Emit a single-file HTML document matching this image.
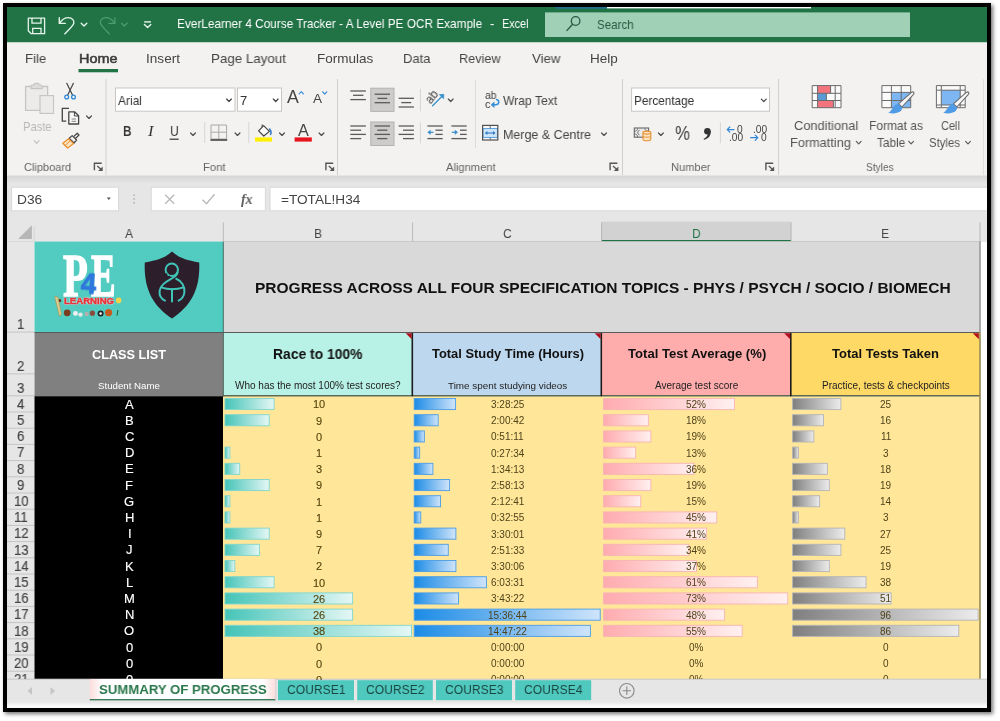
<!DOCTYPE html>
<html><head><meta charset="utf-8"><title>Excel</title>
<style>
html,body{margin:0;padding:0;background:#fff;}
body{width:1000px;height:721px;position:relative;overflow:hidden;font-family:"Liberation Sans",sans-serif;}
#frame{position:absolute;left:3px;top:3px;width:980px;height:701px;border:4px solid #000;box-shadow:2px 2px 4px rgba(0,0,0,.55);background:transparent;z-index:5;pointer-events:none;}
svg#g{position:absolute;left:0;top:0;}
.t{position:absolute;white-space:nowrap;transform-origin:0 50%;will-change:transform;font-family:"Liberation Sans",sans-serif;}
</style></head><body>
<div id="frame"></div>
<svg id="g" width="1000" height="721" viewBox="0 0 1000 721">
<defs>
<linearGradient id="gB" x1="0" x2="1" y1="0" y2="0"><stop offset="0" stop-color="#45c4b8"/><stop offset="1" stop-color="#e4f7f5"/></linearGradient>
<linearGradient id="gC" x1="0" x2="1" y1="0" y2="0"><stop offset="0" stop-color="#1b8be6"/><stop offset="1" stop-color="#cfe4fa"/></linearGradient>
<linearGradient id="gD" x1="0" x2="1" y1="0" y2="0"><stop offset="0" stop-color="#ffabaf"/><stop offset="1" stop-color="#fff0f0"/></linearGradient>
<linearGradient id="gE" x1="0" x2="1" y1="0" y2="0"><stop offset="0" stop-color="#7f7f7f"/><stop offset="1" stop-color="#ececec"/></linearGradient>
<linearGradient id="gSh" x1="0" x2="0" y1="0" y2="1"><stop offset="0" stop-color="#d4d4d4"/><stop offset="1" stop-color="#e6e6e6"/></linearGradient>
<linearGradient id="gTab" x1="0" x2="1" y1="0" y2="0"><stop offset="0" stop-color="#fbdcdc"/><stop offset="0.07" stop-color="#ffffff"/><stop offset="0.93" stop-color="#ffffff"/><stop offset="1" stop-color="#fbdcdc"/></linearGradient>
<linearGradient id="gTb" x1="0" x2="0" y1="0" y2="1"><stop offset="0" stop-color="#e6e6e6"/><stop offset="0.6" stop-color="#f8f8f8"/><stop offset="1" stop-color="#fcfcfc"/></linearGradient>
</defs>
<rect x="7.00" y="7.00" width="980.00" height="35.50" fill="#217346" />
<rect x="555.00" y="6.30" width="52.00" height="2.50" fill="#24708a" />
<rect x="607.00" y="6.80" width="204.00" height="1.60" fill="#ffffff" />
<rect x="545.00" y="12.40" width="365.00" height="24.60" fill="#a0d0b6" />
<rect x="7.00" y="42.50" width="980.00" height="133.10" fill="#f3f2f1" />
<rect x="7.00" y="175.60" width="980.00" height="66.40" fill="#e6e6e6" />
<rect x="7.00" y="175.60" width="980.00" height="7.40" fill="url(#gSh)" />
<rect x="11.60" y="187.20" width="107.00" height="23.60" fill="#fff" stroke="#d8d8d8" stroke-width="1"/>
<rect x="151.20" y="187.20" width="114.20" height="23.60" fill="#fff" stroke="#d8d8d8" stroke-width="1"/>
<rect x="270.00" y="187.20" width="720.00" height="23.60" fill="#fff" stroke="#d8d8d8" stroke-width="1"/>
<rect x="78.50" y="69.00" width="39.50" height="3.30" fill="#217346" />
<line x1="106.00" y1="79.00" x2="106.00" y2="175.00" stroke="#d0cfce" stroke-width="1" />
<line x1="337.50" y1="79.00" x2="337.50" y2="175.00" stroke="#d0cfce" stroke-width="1" />
<line x1="622.50" y1="79.00" x2="622.50" y2="175.00" stroke="#d0cfce" stroke-width="1" />
<line x1="778.60" y1="79.00" x2="778.60" y2="175.00" stroke="#d0cfce" stroke-width="1" />
<line x1="983.40" y1="79.00" x2="983.40" y2="175.00" stroke="#e0dfde" stroke-width="1" />
<line x1="475.50" y1="80.00" x2="475.50" y2="148.00" stroke="#dddcdb" stroke-width="1" />
<line x1="204.70" y1="122.00" x2="204.70" y2="143.00" stroke="#d6d5d4" stroke-width="1" />
<line x1="248.80" y1="122.00" x2="248.80" y2="143.00" stroke="#d6d5d4" stroke-width="1" />
<line x1="420.40" y1="88.80" x2="420.40" y2="111.40" stroke="#d6d5d4" stroke-width="1" />
<line x1="420.40" y1="122.30" x2="420.40" y2="143.40" stroke="#d6d5d4" stroke-width="1" />
<line x1="720.40" y1="122.30" x2="720.40" y2="143.30" stroke="#d6d5d4" stroke-width="1" />
<path d="M34.10 140.70 L36.60 143.30 L39.10 140.70" fill="none" stroke="#c2c1c0" stroke-width="1.2" stroke-linecap="round" stroke-linejoin="round"/>
<rect x="115.50" y="88.00" width="119.50" height="23.20" fill="#fff" stroke="#c8c6c4" stroke-width="1"/>
<rect x="237.50" y="88.00" width="44.00" height="23.20" fill="#fff" stroke="#c8c6c4" stroke-width="1"/>
<path d="M226.60 99.05 L229.00 101.55 L231.40 99.05" fill="none" stroke="#444" stroke-width="1.25" stroke-linecap="round" stroke-linejoin="round"/>
<path d="M273.30 99.05 L275.70 101.55 L278.10 99.05" fill="none" stroke="#444" stroke-width="1.25" stroke-linecap="round" stroke-linejoin="round"/>
<rect x="631.60" y="88.00" width="137.90" height="23.20" fill="#fff" stroke="#c8c6c4" stroke-width="1"/>
<path d="M761.40 99.15 L763.80 101.65 L766.20 99.15" fill="none" stroke="#444" stroke-width="1.25" stroke-linecap="round" stroke-linejoin="round"/>
<line x1="169.60" y1="139.20" x2="178.70" y2="139.20" stroke="#333" stroke-width="1.2" />
<path d="M190.60 132.95 L193.00 135.45 L195.40 132.95" fill="none" stroke="#505050" stroke-width="1.25" stroke-linecap="round" stroke-linejoin="round"/>
<path d="M601.60 132.95 L604.00 135.45 L606.40 132.95" fill="none" stroke="#505050" stroke-width="1.25" stroke-linecap="round" stroke-linejoin="round"/>
<path d="M856.30 141.35 L858.70 143.85 L861.10 141.35" fill="none" stroke="#606060" stroke-width="1.25" stroke-linecap="round" stroke-linejoin="round"/>
<path d="M908.70 141.35 L911.10 143.85 L913.50 141.35" fill="none" stroke="#606060" stroke-width="1.25" stroke-linecap="round" stroke-linejoin="round"/>
<path d="M965.60 141.35 L968.00 143.85 L970.40 141.35" fill="none" stroke="#606060" stroke-width="1.25" stroke-linecap="round" stroke-linejoin="round"/>
<path d="M658.50 132.95 L660.90 135.45 L663.30 132.95" fill="none" stroke="#505050" stroke-width="1.25" stroke-linecap="round" stroke-linejoin="round"/>
<path d="M106.8 197.5 L110.8 197.5 L108.8 199.9 Z" fill="#555" stroke="none" stroke-width="1" />
<rect x="133.30" y="194.40" width="1.60" height="1.60" fill="#b5b5b5" />
<rect x="133.30" y="198.20" width="1.60" height="1.60" fill="#b5b5b5" />
<rect x="133.30" y="202.00" width="1.60" height="1.60" fill="#b5b5b5" />
<path d="M165.2 194.8 L174.2 203.8 M174.2 194.8 L165.2 203.8" fill="none" stroke="#b9b9b9" stroke-width="1.3" />
<path d="M202.5 199.8 L206.5 203.8 L214.5 194.3" fill="none" stroke="#b9b9b9" stroke-width="1.4" />
<rect x="7.00" y="221.60" width="973.50" height="20.00" fill="#e6e6e6" />
<rect x="601.50" y="221.60" width="189.50" height="20.00" fill="#d2d2d2" />
<rect x="601.50" y="240.00" width="189.50" height="1.80" fill="#217346" />
<line x1="223.30" y1="222.40" x2="223.30" y2="241.60" stroke="#b4b4b4" stroke-width="0.9" />
<line x1="412.60" y1="222.40" x2="412.60" y2="241.60" stroke="#b4b4b4" stroke-width="0.9" />
<line x1="601.60" y1="222.40" x2="601.60" y2="241.60" stroke="#b4b4b4" stroke-width="0.9" />
<line x1="791.10" y1="222.40" x2="791.10" y2="241.60" stroke="#b4b4b4" stroke-width="0.9" />
<line x1="980.00" y1="222.40" x2="980.00" y2="241.60" stroke="#b4b4b4" stroke-width="0.9" />
<line x1="34.20" y1="226.00" x2="34.20" y2="241.60" stroke="#d6d6d6" stroke-width="1" />
<line x1="7.00" y1="241.70" x2="34.00" y2="241.70" stroke="#cdcdcd" stroke-width="1" />
<line x1="223.50" y1="241.70" x2="980.50" y2="241.70" stroke="#b4b4b4" stroke-width="1" />
<path d="M31.9 225.3 L31.9 239 L18 239 Z" fill="#b7b7b7" stroke="none" stroke-width="1" />
<rect x="7.00" y="241.60" width="27.50" height="437.40" fill="#e6e6e6" />
<line x1="7.00" y1="332.10" x2="34.50" y2="332.10" stroke="#c4c4c4" stroke-width="1" />
<line x1="7.00" y1="373.90" x2="34.50" y2="373.90" stroke="#c4c4c4" stroke-width="1" />
<line x1="7.00" y1="395.80" x2="34.50" y2="395.80" stroke="#c4c4c4" stroke-width="1" />
<line x1="7.00" y1="412.00" x2="34.50" y2="412.00" stroke="#c4c4c4" stroke-width="1" />
<line x1="7.00" y1="428.20" x2="34.50" y2="428.20" stroke="#c4c4c4" stroke-width="1" />
<line x1="7.00" y1="444.40" x2="34.50" y2="444.40" stroke="#c4c4c4" stroke-width="1" />
<line x1="7.00" y1="460.60" x2="34.50" y2="460.60" stroke="#c4c4c4" stroke-width="1" />
<line x1="7.00" y1="476.80" x2="34.50" y2="476.80" stroke="#c4c4c4" stroke-width="1" />
<line x1="7.00" y1="493.00" x2="34.50" y2="493.00" stroke="#c4c4c4" stroke-width="1" />
<line x1="7.00" y1="509.20" x2="34.50" y2="509.20" stroke="#c4c4c4" stroke-width="1" />
<line x1="7.00" y1="525.40" x2="34.50" y2="525.40" stroke="#c4c4c4" stroke-width="1" />
<line x1="7.00" y1="541.60" x2="34.50" y2="541.60" stroke="#c4c4c4" stroke-width="1" />
<line x1="7.00" y1="557.80" x2="34.50" y2="557.80" stroke="#c4c4c4" stroke-width="1" />
<line x1="7.00" y1="574.00" x2="34.50" y2="574.00" stroke="#c4c4c4" stroke-width="1" />
<line x1="7.00" y1="590.20" x2="34.50" y2="590.20" stroke="#c4c4c4" stroke-width="1" />
<line x1="7.00" y1="606.40" x2="34.50" y2="606.40" stroke="#c4c4c4" stroke-width="1" />
<line x1="7.00" y1="622.60" x2="34.50" y2="622.60" stroke="#c4c4c4" stroke-width="1" />
<line x1="7.00" y1="638.80" x2="34.50" y2="638.80" stroke="#c4c4c4" stroke-width="1" />
<line x1="7.00" y1="655.00" x2="34.50" y2="655.00" stroke="#c4c4c4" stroke-width="1" />
<line x1="7.00" y1="671.20" x2="34.50" y2="671.20" stroke="#c4c4c4" stroke-width="1" />
<line x1="7.00" y1="687.40" x2="34.50" y2="687.40" stroke="#c4c4c4" stroke-width="1" />
<rect x="34.50" y="241.60" width="188.50" height="90.90" fill="#52cbc0" />
<rect x="223.00" y="241.60" width="756.60" height="90.90" fill="#d9d9d9" />
<rect x="34.50" y="332.50" width="188.50" height="63.70" fill="#808080" />
<rect x="223.00" y="332.50" width="189.50" height="63.70" fill="#b8f1e5" />
<rect x="412.50" y="332.50" width="189.00" height="63.70" fill="#bdd7ee" />
<rect x="601.50" y="332.50" width="189.50" height="63.70" fill="#ffacac" />
<rect x="791.00" y="332.50" width="188.60" height="63.70" fill="#ffd966" />
<rect x="34.50" y="396.20" width="188.50" height="282.80" fill="#000" />
<rect x="223.00" y="396.20" width="756.60" height="282.80" fill="#ffe699" />
<line x1="34.50" y1="332.50" x2="979.60" y2="332.50" stroke="#5a5a5a" stroke-width="1.2" />
<line x1="223.00" y1="395.80" x2="979.60" y2="395.80" stroke="#5c6a55" stroke-width="1.4" />
<line x1="412.30" y1="333.00" x2="412.30" y2="396.20" stroke="#1c1c1c" stroke-width="1.6" />
<line x1="601.30" y1="333.00" x2="601.30" y2="396.20" stroke="#1c1c1c" stroke-width="1.6" />
<line x1="790.80" y1="333.00" x2="790.80" y2="396.20" stroke="#1c1c1c" stroke-width="1.6" />
<line x1="223.30" y1="241.60" x2="223.30" y2="332.50" stroke="#3f6d68" stroke-width="1" />
<line x1="223.30" y1="332.50" x2="223.30" y2="396.20" stroke="#4a5a56" stroke-width="1" />
<line x1="980.00" y1="241.60" x2="980.00" y2="332.50" stroke="#8c8c8c" stroke-width="1.4" />
<line x1="980.00" y1="332.50" x2="980.00" y2="679.00" stroke="#8a7a3a" stroke-width="1.4" />
<path d="M405.7 333.2 L411.7 333.2 L411.7 339.2 Z" fill="#b0101e" stroke="none" stroke-width="1" />
<path d="M594.7 333.2 L600.7 333.2 L600.7 339.2 Z" fill="#b0101e" stroke="none" stroke-width="1" />
<path d="M784.2 333.2 L790.2 333.2 L790.2 339.2 Z" fill="#b0101e" stroke="none" stroke-width="1" />
<path d="M972.8 333.2 L978.8 333.2 L978.8 339.2 Z" fill="#b0101e" stroke="none" stroke-width="1" />
<clipPath id="cs"><rect x="7" y="242" width="980" height="437"/></clipPath><g clip-path="url(#cs)">
<rect x="225.00" y="398.50" width="49.08" height="11.10" fill="url(#gB)" stroke="#7fd6cc" stroke-width="0.9"/>
<rect x="414.20" y="398.50" width="41.38" height="11.10" fill="url(#gC)" stroke="#4a9de6" stroke-width="0.9"/>
<rect x="603.60" y="398.50" width="130.92" height="11.10" fill="url(#gD)" stroke="#f7b5b5" stroke-width="0.9"/>
<rect x="792.60" y="398.50" width="48.31" height="11.10" fill="url(#gE)" stroke="#b4b4b4" stroke-width="0.9"/>
<rect x="225.00" y="414.70" width="44.17" height="11.10" fill="url(#gB)" stroke="#7fd6cc" stroke-width="0.9"/>
<rect x="414.20" y="414.70" width="23.97" height="11.10" fill="url(#gC)" stroke="#4a9de6" stroke-width="0.9"/>
<rect x="603.60" y="414.70" width="44.73" height="11.10" fill="url(#gD)" stroke="#f7b5b5" stroke-width="0.9"/>
<rect x="792.60" y="414.70" width="30.92" height="11.10" fill="url(#gE)" stroke="#b4b4b4" stroke-width="0.9"/>
<rect x="414.20" y="430.90" width="10.16" height="11.10" fill="url(#gC)" stroke="#4a9de6" stroke-width="0.9"/>
<rect x="603.60" y="430.90" width="47.27" height="11.10" fill="url(#gD)" stroke="#f7b5b5" stroke-width="0.9"/>
<rect x="792.60" y="430.90" width="21.26" height="11.10" fill="url(#gE)" stroke="#b4b4b4" stroke-width="0.9"/>
<rect x="225.00" y="447.10" width="4.91" height="11.10" fill="url(#gB)" stroke="#7fd6cc" stroke-width="0.9"/>
<rect x="414.20" y="447.10" width="5.47" height="11.10" fill="url(#gC)" stroke="#4a9de6" stroke-width="0.9"/>
<rect x="603.60" y="447.10" width="32.05" height="11.10" fill="url(#gD)" stroke="#f7b5b5" stroke-width="0.9"/>
<rect x="792.60" y="447.10" width="5.80" height="11.10" fill="url(#gE)" stroke="#b4b4b4" stroke-width="0.9"/>
<rect x="225.00" y="463.30" width="14.72" height="11.10" fill="url(#gB)" stroke="#7fd6cc" stroke-width="0.9"/>
<rect x="414.20" y="463.30" width="18.71" height="11.10" fill="url(#gC)" stroke="#4a9de6" stroke-width="0.9"/>
<rect x="603.60" y="463.30" width="90.36" height="11.10" fill="url(#gD)" stroke="#f7b5b5" stroke-width="0.9"/>
<rect x="792.60" y="463.30" width="34.78" height="11.10" fill="url(#gE)" stroke="#b4b4b4" stroke-width="0.9"/>
<rect x="225.00" y="479.50" width="44.17" height="11.10" fill="url(#gB)" stroke="#7fd6cc" stroke-width="0.9"/>
<rect x="414.20" y="479.50" width="35.39" height="11.10" fill="url(#gC)" stroke="#4a9de6" stroke-width="0.9"/>
<rect x="603.60" y="479.50" width="47.27" height="11.10" fill="url(#gD)" stroke="#f7b5b5" stroke-width="0.9"/>
<rect x="792.60" y="479.50" width="36.71" height="11.10" fill="url(#gE)" stroke="#b4b4b4" stroke-width="0.9"/>
<rect x="225.00" y="495.70" width="4.91" height="11.10" fill="url(#gB)" stroke="#7fd6cc" stroke-width="0.9"/>
<rect x="414.20" y="495.70" width="26.35" height="11.10" fill="url(#gC)" stroke="#4a9de6" stroke-width="0.9"/>
<rect x="603.60" y="495.70" width="37.13" height="11.10" fill="url(#gD)" stroke="#f7b5b5" stroke-width="0.9"/>
<rect x="792.60" y="495.70" width="27.05" height="11.10" fill="url(#gE)" stroke="#b4b4b4" stroke-width="0.9"/>
<rect x="225.00" y="511.90" width="4.91" height="11.10" fill="url(#gB)" stroke="#7fd6cc" stroke-width="0.9"/>
<rect x="414.20" y="511.90" width="6.54" height="11.10" fill="url(#gC)" stroke="#4a9de6" stroke-width="0.9"/>
<rect x="603.60" y="511.90" width="113.17" height="11.10" fill="url(#gD)" stroke="#f7b5b5" stroke-width="0.9"/>
<rect x="792.60" y="511.90" width="5.80" height="11.10" fill="url(#gE)" stroke="#b4b4b4" stroke-width="0.9"/>
<rect x="225.00" y="528.10" width="44.17" height="11.10" fill="url(#gB)" stroke="#7fd6cc" stroke-width="0.9"/>
<rect x="414.20" y="528.10" width="41.70" height="11.10" fill="url(#gC)" stroke="#4a9de6" stroke-width="0.9"/>
<rect x="603.60" y="528.10" width="103.03" height="11.10" fill="url(#gD)" stroke="#f7b5b5" stroke-width="0.9"/>
<rect x="792.60" y="528.10" width="52.17" height="11.10" fill="url(#gE)" stroke="#b4b4b4" stroke-width="0.9"/>
<rect x="225.00" y="544.30" width="34.36" height="11.10" fill="url(#gB)" stroke="#7fd6cc" stroke-width="0.9"/>
<rect x="414.20" y="544.30" width="34.06" height="11.10" fill="url(#gC)" stroke="#4a9de6" stroke-width="0.9"/>
<rect x="603.60" y="544.30" width="85.29" height="11.10" fill="url(#gD)" stroke="#f7b5b5" stroke-width="0.9"/>
<rect x="792.60" y="544.30" width="48.31" height="11.10" fill="url(#gE)" stroke="#b4b4b4" stroke-width="0.9"/>
<rect x="225.00" y="560.50" width="9.82" height="11.10" fill="url(#gB)" stroke="#7fd6cc" stroke-width="0.9"/>
<rect x="414.20" y="560.50" width="41.72" height="11.10" fill="url(#gC)" stroke="#4a9de6" stroke-width="0.9"/>
<rect x="603.60" y="560.50" width="92.89" height="11.10" fill="url(#gD)" stroke="#f7b5b5" stroke-width="0.9"/>
<rect x="792.60" y="560.50" width="36.71" height="11.10" fill="url(#gE)" stroke="#b4b4b4" stroke-width="0.9"/>
<rect x="225.00" y="576.70" width="49.08" height="11.10" fill="url(#gB)" stroke="#7fd6cc" stroke-width="0.9"/>
<rect x="414.20" y="576.70" width="72.18" height="11.10" fill="url(#gC)" stroke="#4a9de6" stroke-width="0.9"/>
<rect x="603.60" y="576.70" width="153.74" height="11.10" fill="url(#gD)" stroke="#f7b5b5" stroke-width="0.9"/>
<rect x="792.60" y="576.70" width="73.43" height="11.10" fill="url(#gE)" stroke="#b4b4b4" stroke-width="0.9"/>
<rect x="225.00" y="592.90" width="127.61" height="11.10" fill="url(#gB)" stroke="#7fd6cc" stroke-width="0.9"/>
<rect x="414.20" y="592.90" width="44.35" height="11.10" fill="url(#gC)" stroke="#4a9de6" stroke-width="0.9"/>
<rect x="603.60" y="592.90" width="184.16" height="11.10" fill="url(#gD)" stroke="#f7b5b5" stroke-width="0.9"/>
<rect x="792.60" y="592.90" width="98.55" height="11.10" fill="url(#gE)" stroke="#b4b4b4" stroke-width="0.9"/>
<rect x="225.00" y="609.10" width="127.61" height="11.10" fill="url(#gB)" stroke="#7fd6cc" stroke-width="0.9"/>
<rect x="414.20" y="609.10" width="186.00" height="11.10" fill="url(#gC)" stroke="#4a9de6" stroke-width="0.9"/>
<rect x="603.60" y="609.10" width="120.78" height="11.10" fill="url(#gD)" stroke="#f7b5b5" stroke-width="0.9"/>
<rect x="792.60" y="609.10" width="185.50" height="11.10" fill="url(#gE)" stroke="#b4b4b4" stroke-width="0.9"/>
<rect x="225.00" y="625.30" width="186.50" height="11.10" fill="url(#gB)" stroke="#7fd6cc" stroke-width="0.9"/>
<rect x="414.20" y="625.30" width="176.20" height="11.10" fill="url(#gC)" stroke="#4a9de6" stroke-width="0.9"/>
<rect x="603.60" y="625.30" width="138.53" height="11.10" fill="url(#gD)" stroke="#f7b5b5" stroke-width="0.9"/>
<rect x="792.60" y="625.30" width="166.18" height="11.10" fill="url(#gE)" stroke="#b4b4b4" stroke-width="0.9"/>
</g>
<rect x="7.00" y="679.00" width="980.00" height="23.00" fill="#e6e6e6" />
<rect x="7.00" y="702.00" width="980.00" height="6.00" fill="url(#gTb)" />
<line x1="7.00" y1="679.20" x2="987.00" y2="679.20" stroke="#c9c9c9" stroke-width="1" />
<rect x="89.80" y="679.00" width="185.80" height="21.20" fill="url(#gTab)" />
<rect x="89.80" y="699.00" width="185.80" height="1.40" fill="#3a7a58" />
<line x1="275.90" y1="680.00" x2="275.90" y2="700.00" stroke="#d4d4d4" stroke-width="1" />
<rect x="278.00" y="680.20" width="76.00" height="20.00" fill="#4fc9be" />
<rect x="357.20" y="680.20" width="75.60" height="20.00" fill="#4fc9be" />
<rect x="436.00" y="680.20" width="76.00" height="20.00" fill="#4fc9be" />
<rect x="515.20" y="680.20" width="76.00" height="20.00" fill="#4fc9be" />
<path d="M32 687 L27.5 691 L32 695 Z" fill="#c6c6c6" stroke="none" stroke-width="1" />
<path d="M50.5 687 L55 691 L50.5 695 Z" fill="#c6c6c6" stroke="none" stroke-width="1" />
<circle cx="626.8" cy="690.8" r="7.3" fill="none" stroke="#8a8a8a" stroke-width="1.1"/>
<path d="M622.6 690.8 L631 690.8 M626.8 686.6 L626.8 695" fill="none" stroke="#8a8a8a" stroke-width="1.1" />
<path d="M28.3 18.1 H44.6 V33.7 H31.2 L28.3 30.8 Z" fill="none" stroke="#e3f5ea" stroke-width="1.3" stroke-linejoin="round"/>
<path d="M32 18.1 V23.2 H41 V18.1" fill="none" stroke="#e3f5ea" stroke-width="1.3" />
<path d="M32.7 33.7 V28.4 H41 V33.7" fill="none" stroke="#e3f5ea" stroke-width="1.3" />
<path d="M59.3 17.8 V23.4 H65.3" fill="none" stroke="#e3f5ea" stroke-width="1.4" stroke-linecap="round" stroke-linejoin="round"/>
<path d="M59.6 23.2 C62 19.5 65 17.6 68.3 17.6 C72.2 17.6 74.3 20.4 73.8 23.2 C73.4 25.6 71.5 27.4 64.8 33.8" fill="none" stroke="#e3f5ea" stroke-width="1.4" stroke-linecap="round" stroke-linejoin="round"/>
<path d="M81.20 23.20 L84.00 26.00 L86.80 23.20" fill="none" stroke="#e3f5ea" stroke-width="1.4" stroke-linecap="round" stroke-linejoin="round"/>
<path d="M114.9 17.8 V23.4 H108.9" fill="none" stroke="#4e9a72" stroke-width="1.3" stroke-linecap="round" stroke-linejoin="round"/>
<path d="M114.6 23.2 C112.2 19.5 109.2 17.6 105.9 17.6 C102 17.6 99.9 20.4 100.4 23.2 C100.8 25.6 102.7 27.4 109.4 33.8" fill="none" stroke="#4e9a72" stroke-width="1.3" stroke-linecap="round" stroke-linejoin="round"/>
<path d="M121.50 23.20 L124.30 26.00 L127.10 23.20" fill="none" stroke="#4e9a72" stroke-width="1.3" stroke-linecap="round" stroke-linejoin="round"/>
<path d="M144.2 21.9 H151" fill="none" stroke="#e3f5ea" stroke-width="1.4" />
<path d="M144.4 24.6 L147.6 27.6 L150.8 24.6" fill="none" stroke="#e3f5ea" stroke-width="1.4" stroke-linecap="round" stroke-linejoin="round"/>
<circle cx="575.6" cy="21" r="4.3" fill="none" stroke="#2a5a41" stroke-width="1.3"/>
<path d="M572.6 24.2 L567 30.4" fill="none" stroke="#2a5a41" stroke-width="1.4" stroke-linecap="round"/>
<path d="M94.4 170.2 V163.2 H101.7" fill="none" stroke="#555" stroke-width="1.4" />
<path d="M97.3 166.0 L101.5 169.8" fill="none" stroke="#555" stroke-width="1.3" />
<path d="M98.1 171.1 H102.7 V166.4 Z" fill="#555" stroke="none" stroke-width="1" />
<path d="M325.9 170.2 V163.2 H333.2" fill="none" stroke="#555" stroke-width="1.4" />
<path d="M328.8 166.0 L333.0 169.8" fill="none" stroke="#555" stroke-width="1.3" />
<path d="M329.6 171.1 H334.2 V166.4 Z" fill="#555" stroke="none" stroke-width="1" />
<path d="M610.1 170.2 V163.2 H617.4" fill="none" stroke="#555" stroke-width="1.4" />
<path d="M613.0 166.0 L617.2 169.8" fill="none" stroke="#555" stroke-width="1.3" />
<path d="M613.8 171.1 H618.4 V166.4 Z" fill="#555" stroke="none" stroke-width="1" />
<path d="M765.9 170.2 V163.2 H773.2" fill="none" stroke="#555" stroke-width="1.4" />
<path d="M768.8 166.0 L773.0 169.8" fill="none" stroke="#555" stroke-width="1.3" />
<path d="M769.6 171.1 H774.2 V166.4 Z" fill="#555" stroke="none" stroke-width="1" />
<path d="M25.6 86.5 H47.6 V110.4 H25.6 Z" fill="#eceBea" stroke="#c6c5c4" stroke-width="1.3" />
<path d="M31 88.6 V86 C31 85 33 84.8 34 84.6 C34.3 82.6 38.9 82.6 39.2 84.6 C40.2 84.8 42.2 85 42.2 86 V88.6 Z" fill="#dddcdb" stroke="#c6c5c4" stroke-width="1.1" />
<rect x="40.00" y="95.60" width="13.50" height="17.80" fill="#ecebea" stroke="#c6c5c4" stroke-width="1.2"/>
<path d="M66.8 83.3 L72.6 95.2 M73.4 83.3 L67.6 95.2" fill="none" stroke="#444" stroke-width="1.2" stroke-linecap="round"/>
<circle cx="66.7" cy="97" r="1.9" fill="none" stroke="#2f86d6" stroke-width="1.3"/>
<circle cx="73.5" cy="97" r="1.9" fill="none" stroke="#2f86d6" stroke-width="1.3"/>
<path d="M69 108.3 H62.3 V121.2 H66.2" fill="none" stroke="#444" stroke-width="1.3" />
<path d="M68.8 111.8 H74.6 L78.6 115.8 V124 H68.8 Z" fill="#f8f8f8" stroke="#444" stroke-width="1.3" stroke-linejoin="round"/>
<path d="M74.4 112 V116 H78.4" fill="none" stroke="#444" stroke-width="1" />
<path d="M71.6 119 H76 M71.6 121.3 H76" fill="none" stroke="#777" stroke-width="0.9" />
<path d="M86.60 115.95 L89.00 118.45 L91.40 115.95" fill="none" stroke="#505050" stroke-width="1.25" stroke-linecap="round" stroke-linejoin="round"/>
<path d="M73.6 136.6 L77.2 133.2 L79 135 L75.4 138.5" fill="none" stroke="#444" stroke-width="1.2" stroke-linejoin="round"/>
<path d="M69.2 138.2 L72.2 135.6 L76.6 140 L74 143 Z" fill="#f3f2f1" stroke="#444" stroke-width="1.2" stroke-linejoin="round"/>
<path d="M68.6 138.8 L73.6 143.6 L67.6 148 L62.8 143.2 Z" fill="#fbe3c4" stroke="#e8912d" stroke-width="1.3" stroke-linejoin="round"/>
<path d="M65 145.6 L70 141" fill="none" stroke="#e8912d" stroke-width="1" />
<path d="M299.2 93.8 L301.3 91.6 L303.4 93.8" fill="none" stroke="#3b8edb" stroke-width="1.2" stroke-linecap="round" stroke-linejoin="round"/>
<path d="M322.6 91.8 L324.7 94 L326.8 91.8" fill="none" stroke="#3b8edb" stroke-width="1.2" stroke-linecap="round" stroke-linejoin="round"/>
<path d="M211 125 H226.6 V139 H211 Z M218.8 125 V139 M211 132.2 H226.6" fill="none" stroke="#a9a8a7" stroke-width="1" />
<path d="M210.4 140 H227.2" fill="none" stroke="#444" stroke-width="1.6" />
<path d="M235.10 132.95 L237.50 135.45 L239.90 132.95" fill="none" stroke="#505050" stroke-width="1.25" stroke-linecap="round" stroke-linejoin="round"/>
<path d="M263.6 125.6 L269.4 131.4 L263.8 136 L258.6 130.8 Z" fill="#fafafa" stroke="#444" stroke-width="1.2" stroke-linejoin="round"/>
<path d="M262.2 127 V124.6" fill="none" stroke="#444" stroke-width="1.1" />
<path d="M269.6 129 C271 130.6 271.4 132.6 270.6 134.4" fill="none" stroke="#2f78c4" stroke-width="1.5" stroke-linecap="round"/>
<rect x="255.00" y="137.40" width="17.00" height="4.20" fill="#ffef00" />
<path d="M279.60 132.95 L282.00 135.45 L284.40 132.95" fill="none" stroke="#505050" stroke-width="1.25" stroke-linecap="round" stroke-linejoin="round"/>
<rect x="294.60" y="137.40" width="17.20" height="4.20" fill="#e6151d" />
<path d="M319.10 132.95 L321.50 135.45 L323.90 132.95" fill="none" stroke="#505050" stroke-width="1.25" stroke-linecap="round" stroke-linejoin="round"/>
<rect x="370.80" y="88.20" width="23.20" height="23.20" fill="#cdcccb" stroke="#b3b2b1" stroke-width="1"/>
<rect x="370.80" y="122.00" width="23.20" height="23.50" fill="#cdcccb" stroke="#b3b2b1" stroke-width="1"/>
<line x1="350.30" y1="91.00" x2="365.90" y2="91.00" stroke="#5a5a5a" stroke-width="1.3" />
<line x1="353.00" y1="95.30" x2="363.40" y2="95.30" stroke="#5a5a5a" stroke-width="1.3" />
<line x1="350.30" y1="99.60" x2="365.90" y2="99.60" stroke="#5a5a5a" stroke-width="1.3" />
<line x1="374.60" y1="94.20" x2="390.00" y2="94.20" stroke="#5a5a5a" stroke-width="1.3" />
<line x1="377.40" y1="98.40" x2="387.20" y2="98.40" stroke="#5a5a5a" stroke-width="1.3" />
<line x1="374.60" y1="102.70" x2="390.00" y2="102.70" stroke="#5a5a5a" stroke-width="1.3" />
<line x1="398.60" y1="98.30" x2="413.90" y2="98.30" stroke="#5a5a5a" stroke-width="1.3" />
<line x1="401.30" y1="102.60" x2="411.20" y2="102.60" stroke="#5a5a5a" stroke-width="1.3" />
<line x1="398.60" y1="107.00" x2="413.90" y2="107.00" stroke="#5a5a5a" stroke-width="1.3" />
<line x1="350.30" y1="126.00" x2="365.90" y2="126.00" stroke="#5a5a5a" stroke-width="1.3" />
<line x1="350.30" y1="130.20" x2="361.20" y2="130.20" stroke="#5a5a5a" stroke-width="1.3" />
<line x1="350.30" y1="134.40" x2="365.90" y2="134.40" stroke="#5a5a5a" stroke-width="1.3" />
<line x1="350.30" y1="138.60" x2="361.20" y2="138.60" stroke="#5a5a5a" stroke-width="1.3" />
<line x1="374.60" y1="126.00" x2="390.00" y2="126.00" stroke="#5a5a5a" stroke-width="1.3" />
<line x1="377.20" y1="130.20" x2="387.40" y2="130.20" stroke="#5a5a5a" stroke-width="1.3" />
<line x1="374.60" y1="134.40" x2="390.00" y2="134.40" stroke="#5a5a5a" stroke-width="1.3" />
<line x1="377.20" y1="138.60" x2="387.40" y2="138.60" stroke="#5a5a5a" stroke-width="1.3" />
<line x1="398.60" y1="126.00" x2="413.90" y2="126.00" stroke="#5a5a5a" stroke-width="1.3" />
<line x1="403.00" y1="130.20" x2="413.90" y2="130.20" stroke="#5a5a5a" stroke-width="1.3" />
<line x1="398.60" y1="134.40" x2="413.90" y2="134.40" stroke="#5a5a5a" stroke-width="1.3" />
<line x1="403.00" y1="138.60" x2="413.90" y2="138.60" stroke="#5a5a5a" stroke-width="1.3" />
<path d="M432.6 105.8 L442.6 95.8" fill="none" stroke="#3a92cc" stroke-width="1.3" stroke-linecap="round"/>
<path d="M439.4 94.6 L443.8 94.4 L443.6 98.8 Z" fill="#3a92cc" stroke="#3a92cc" stroke-width="0.8" stroke-linejoin="round"/>
<path d="M448.30 99.05 L450.70 101.55 L453.10 99.05" fill="none" stroke="#505050" stroke-width="1.25" stroke-linecap="round" stroke-linejoin="round"/>
<line x1="427.40" y1="126.00" x2="442.70" y2="126.00" stroke="#5a5a5a" stroke-width="1.3" />
<line x1="435.40" y1="130.20" x2="442.70" y2="130.20" stroke="#5a5a5a" stroke-width="1.3" />
<line x1="435.40" y1="134.40" x2="442.70" y2="134.40" stroke="#5a5a5a" stroke-width="1.3" />
<line x1="427.40" y1="138.60" x2="442.70" y2="138.60" stroke="#5a5a5a" stroke-width="1.3" />
<path d="M433.4 132.3 H429" fill="none" stroke="#3a8fcc" stroke-width="1.3" />
<path d="M430.6 129.7 L427.4 132.3 L430.6 134.9 Z" fill="#3a8fcc" stroke="none" stroke-width="1" />
<line x1="451.40" y1="126.00" x2="466.70" y2="126.00" stroke="#5a5a5a" stroke-width="1.3" />
<line x1="460.00" y1="130.20" x2="466.70" y2="130.20" stroke="#5a5a5a" stroke-width="1.3" />
<line x1="460.00" y1="134.40" x2="466.70" y2="134.40" stroke="#5a5a5a" stroke-width="1.3" />
<line x1="451.40" y1="138.60" x2="466.70" y2="138.60" stroke="#5a5a5a" stroke-width="1.3" />
<path d="M451.8 132.3 H456.4" fill="none" stroke="#3a8fcc" stroke-width="1.3" />
<path d="M454.8 129.7 L458 132.3 L454.8 134.9 Z" fill="#3a8fcc" stroke="none" stroke-width="1" />
<path d="M496.6 99.6 C499.8 100.2 499.4 104.8 495.8 104.8 H492.6" fill="none" stroke="#3a8fd6" stroke-width="1.5" stroke-linecap="round"/>
<path d="M494.2 102 L491 104.8 L494.2 107.4 Z" fill="#3a8fd6" stroke="#3a8fd6" stroke-width="0.6" stroke-linejoin="round"/>
<rect x="482.60" y="125.40" width="15.20" height="14.60" fill="#f8f8f8" />
<rect x="483.00" y="128.60" width="14.40" height="8.80" fill="#cfe6fa" stroke="#4a98dc" stroke-width="0.9"/>
<rect x="482.60" y="125.40" width="15.20" height="14.60" fill="none" stroke="#505050" stroke-width="1.2"/>
<path d="M490.2 125.6 V128.4 M490.2 137.6 V139.8" fill="none" stroke="#666" stroke-width="1" />
<path d="M485.6 133 H494.8" fill="none" stroke="#2f78c4" stroke-width="1.1" />
<path d="M487.4 131 L485 133 L487.4 135 Z M493 131 L495.4 133 L493 135 Z" fill="#2f78c4" stroke="none" stroke-width="1" />
<rect x="634.30" y="128.00" width="14.30" height="9.20" fill="#e9e9e9" stroke="#666" stroke-width="1.1"/>
<path d="M639.4 130.4 C637.4 130.4 637.2 134.8 639.4 134.8" fill="none" stroke="#666" stroke-width="1" />
<path d="M644.8 128.4 C644.8 130 646.4 131.2 648.4 131.2" fill="none" stroke="#666" stroke-width="0.9" />
<path d="M634.6 131.2 C636.4 131.2 637.6 130 637.6 128.4 M634.6 134 C636.4 134 637.6 135.2 637.6 137" fill="none" stroke="#666" stroke-width="0.9" />
<path d="M643 132.6 V139.2 C643 141.2 650.8 141.2 650.8 139.2 V132.6" fill="#fbe3c4" stroke="#e8912d" stroke-width="1.1" />
<ellipse cx="646.9" cy="132.6" rx="3.9" ry="1.5" fill="#fbe3c4" stroke="#e8912d" stroke-width="1.1"/>
<path d="M643 135.9 C643 137.7 650.8 137.7 650.8 135.9" fill="none" stroke="#e8912d" stroke-width="1" />
<circle cx="707.4" cy="131.2" r="3.3" fill="#333"/>
<path d="M710.7 131 C711 135.6 708.6 138.6 704 139.8 L703.6 138.8 C706.6 137.6 708 135.4 707.8 133 Z" fill="#333" stroke="none" stroke-width="1" />
<path d="M734 129.6 H727.2 M729.8 127 L727.2 129.6 L729.8 132.2" fill="none" stroke="#2f86d6" stroke-width="1.2" stroke-linecap="round" stroke-linejoin="round"/>
<path d="M750.6 137.7 H757.8 M755.2 135.1 L757.8 137.7 L755.2 140.3" fill="none" stroke="#2f86d6" stroke-width="1.2" stroke-linecap="round" stroke-linejoin="round"/>
<rect x="812.20" y="85.60" width="28.80" height="22.10" fill="#fafafa" />
<rect x="817.60" y="85.60" width="13.00" height="7.70" fill="#f4737d" />
<rect x="817.60" y="100.50" width="15.80" height="7.20" fill="#f4737d" />
<rect x="817.60" y="93.30" width="8.80" height="7.20" fill="#5b9bd5" />
<path d="M812.2 85.6 H841 V107.7 H812.2 Z M812.2 93.3 H841 M812.2 100.5 H841 M817.6 85.6 V107.7 M826.4 93.3 V100.5 M835.2 85.6 V107.7 M830.6 85.6 V93.3 M833.4 100.5 V107.7" fill="none" stroke="#6b6b6b" stroke-width="1" />
<rect x="881.90" y="85.60" width="28.80" height="22.10" fill="#fafafa" />
<rect x="891.40" y="92.40" width="19.30" height="15.30" fill="#7db6f2" />
<path d="M881.9 85.6 H910.7 V107.7 H881.9 Z M881.9 92.4 H910.7 M881.9 100.5 H910.7 M891.4 85.6 V107.7 M901.2 85.6 V107.7" fill="none" stroke="#6b6b6b" stroke-width="1" />
<path d="M911.7 92.2 C913.5 91.2 914.7 93.0 913.5 94.4 L901.9 107.0 L898.5 103.8 Z" fill="#f8f8f8" stroke="#6b6b6b" stroke-width="1.1" stroke-linejoin="round"/>
<path d="M898.1 103.8 L902.1 107.6 C902.7 112.0 896.3 114.6 888.3 112.8 C891.9 111.8 892.7 104.8 898.1 103.8 Z" fill="#4f9be6" stroke="none" stroke-width="1" />
<rect x="936.40" y="85.60" width="28.80" height="22.10" fill="#fafafa" />
<rect x="941.30" y="90.20" width="18.90" height="14.80" fill="#7db6f2" />
<path d="M936.4 85.6 H965.2 V107.7 H936.4 Z M936.4 90.2 H965.2 M936.4 105 H965.2 M941.3 85.6 V107.7 M960.2 85.6 V107.7" fill="none" stroke="#6b6b6b" stroke-width="1" />
<path d="M966.6 92.2 C968.4 91.2 969.6 93.0 968.4 94.4 L956.8 107.0 L953.4 103.8 Z" fill="#f8f8f8" stroke="#6b6b6b" stroke-width="1.1" stroke-linejoin="round"/>
<path d="M953.0 103.8 L957.0 107.6 C957.6 112.0 951.2 114.6 943.2 112.8 C946.8 111.8 947.6 104.8 953.0 103.8 Z" fill="#4f9be6" stroke="none" stroke-width="1" />
<circle cx="67.2" cy="312.8" r="3.4" fill="#7a3b1f"/>
<circle cx="75.5" cy="313.4" r="2.4" fill="#f2f2f2"/>
<circle cx="80.5" cy="314.6" r="2.2" fill="#e8e8e8"/>
<circle cx="86.6" cy="314" r="2.2" fill="#b0b0b0"/>
<circle cx="92.4" cy="313.2" r="2.6" fill="#8a4b3a"/>
<circle cx="100.6" cy="313.6" r="3" fill="#222"/>
<circle cx="108.6" cy="312.6" r="3.6" fill="#c85a1e"/>
<circle cx="118.6" cy="300.4" r="2.8" fill="#f3d34a"/>
<circle cx="59.6" cy="300.6" r="1.6" fill="#6a2b1a"/>
<circle cx="100.6" cy="313.6" r="1.3" fill="#eee"/>
<path d="M54.6 296.5 L58 297 L61.6 314 L59.4 316.6 Z" fill="#d9c98a" stroke="#9a8a4a" stroke-width="0.5" />
<path d="M117 315.6 L118 310" fill="none" stroke="#245c2a" stroke-width="1" />
<path d="M172 251.6 C177.2 256.6 185 260.2 199.2 262.4 C200.4 288 191.6 305.6 172 318.4 C152.4 305.6 143.6 288 144.8 262.4 C159 260.2 166.8 256.6 172 251.6 Z" fill="#2c1f2b" stroke="none" stroke-width="1" />
<circle cx="171.8" cy="269.8" r="6.2" fill="none" stroke="#3fc4b7" stroke-width="2"/>
<path d="M165.8 273.5 L166.2 277.6 L170.4 277" fill="none" stroke="#2c1f2b" stroke-width="2.6"/>
<path d="M177.4 272.8 C176.6 279 160.6 280.8 159.6 291.2 C159.2 295.6 161.6 299.2 165 300.6" fill="none" stroke="#3fc4b7" stroke-width="2" stroke-linecap="round"/>
<path d="M176.2 278.8 C181.6 281 185.2 286.6 184.4 292.4 C183.9 296.2 181.6 299.2 178.6 300.6" fill="none" stroke="#3fc4b7" stroke-width="2" stroke-linecap="round"/>
<path d="M161 287.4 C167.6 289.6 176.8 289.6 183.6 287.4" fill="none" stroke="#3fc4b7" stroke-width="2" />
<path d="M172 289 V301.4" fill="none" stroke="#3fc4b7" stroke-width="2" stroke-linecap="round"/>
</svg>
<span class="t" style="left:177.30px;top:15.30px;font-size:13px;line-height:17px;color:#fff;transform:scaleX(0.9084);">EverLearner 4 Course Tracker - A Level PE OCR Example</span>
<span class="t" style="left:490.00px;top:15.30px;font-size:13px;line-height:17px;color:#fff;transform:scaleX(0.9239);">-</span>
<span class="t" style="left:501.60px;top:15.30px;font-size:13px;line-height:17px;color:#fff;transform:scaleX(0.8304);">Excel</span>
<span class="t" style="left:597.00px;top:15.80px;font-size:13px;line-height:17px;color:#2a5a41;transform:scaleX(0.8885);">Search</span>
<span class="t" style="left:24.50px;top:50.20px;font-size:13.5px;line-height:18px;color:#444;transform:scaleX(0.9768);">File</span>
<span class="t" style="left:146.00px;top:50.20px;font-size:13.5px;line-height:18px;color:#444;transform:scaleX(1.0070);">Insert</span>
<span class="t" style="left:211.00px;top:50.20px;font-size:13.5px;line-height:18px;color:#444;transform:scaleX(0.9893);">Page Layout</span>
<span class="t" style="left:317.00px;top:50.20px;font-size:13.5px;line-height:18px;color:#444;transform:scaleX(0.9953);">Formulas</span>
<span class="t" style="left:402.50px;top:50.20px;font-size:13.5px;line-height:18px;color:#444;transform:scaleX(0.9643);">Data</span>
<span class="t" style="left:459.40px;top:50.20px;font-size:13.5px;line-height:18px;color:#444;transform:scaleX(0.9398);">Review</span>
<span class="t" style="left:531.60px;top:50.20px;font-size:13.5px;line-height:18px;color:#444;transform:scaleX(0.9787);">View</span>
<span class="t" style="left:590.00px;top:50.20px;font-size:13.5px;line-height:18px;color:#444;transform:scaleX(0.9940);">Help</span>
<span class="t" style="left:78.75px;top:50.20px;font-size:13.5px;line-height:18px;color:#3a3a3a;transform:scaleX(1.0691);-webkit-text-stroke:0.55px #3a3a3a;">Home</span>
<span class="t" style="left:23.80px;top:159.70px;font-size:11.5px;line-height:15px;color:#666;transform:scaleX(0.9589);">Clipboard</span>
<span class="t" style="left:202.80px;top:159.70px;font-size:11.5px;line-height:15px;color:#666;transform:scaleX(0.9778);">Font</span>
<span class="t" style="left:446.00px;top:159.70px;font-size:11.5px;line-height:15px;color:#666;transform:scaleX(0.9699);">Alignment</span>
<span class="t" style="left:671.40px;top:159.70px;font-size:11.5px;line-height:15px;color:#666;transform:scaleX(0.9657);">Number</span>
<span class="t" style="left:866.10px;top:159.70px;font-size:11.5px;line-height:15px;color:#666;transform:scaleX(0.8845);">Styles</span>
<span class="t" style="left:23.00px;top:117.50px;font-size:13px;line-height:17px;color:#b9b8b7;transform:scaleX(0.8573);">Paste</span>
<span class="t" style="left:118.00px;top:91.60px;font-size:13px;line-height:17px;color:#333;transform:scaleX(0.9228);">Arial</span>
<span class="t" style="left:240.00px;top:91.60px;font-size:13px;line-height:17px;color:#333;">7</span>
<span class="t" style="left:633.90px;top:91.80px;font-size:13px;line-height:17px;color:#333;transform:scaleX(0.9053);">Percentage</span>
<span class="t" style="left:123.00px;top:122.30px;font-size:14.5px;line-height:19px;color:#333;font-weight:bold;transform:scaleX(0.8117);">B</span>
<span class="t" style="left:147.50px;top:122.30px;font-size:14.5px;line-height:19px;color:#333;font-family:'Liberation Serif',serif;font-style:italic;transform:scaleX(1.1389);">I</span>
<span class="t" style="left:169.80px;top:122.30px;font-size:14px;line-height:18px;color:#333;transform:scaleX(0.8605);">U</span>
<span class="t" style="left:502.60px;top:91.90px;font-size:13px;line-height:17px;color:#444;transform:scaleX(0.9338);">Wrap Text</span>
<span class="t" style="left:502.60px;top:125.50px;font-size:13px;line-height:17px;color:#444;transform:scaleX(0.9590);">Merge &amp; Centre</span>
<span class="t" style="left:794.10px;top:116.80px;font-size:13px;line-height:17px;color:#555;transform:scaleX(0.9870);">Conditional</span>
<span class="t" style="left:789.60px;top:133.80px;font-size:13px;line-height:17px;color:#555;transform:scaleX(0.9785);">Formatting</span>
<span class="t" style="left:869.10px;top:116.80px;font-size:13px;line-height:17px;color:#555;transform:scaleX(0.9229);">Format as</span>
<span class="t" style="left:876.70px;top:133.80px;font-size:13px;line-height:17px;color:#555;transform:scaleX(0.9106);">Table</span>
<span class="t" style="left:941.10px;top:116.80px;font-size:13px;line-height:17px;color:#555;transform:scaleX(0.8439);">Cell</span>
<span class="t" style="left:929.10px;top:133.80px;font-size:13px;line-height:17px;color:#555;transform:scaleX(0.8728);">Styles</span>
<span class="t" style="left:674.50px;top:120.20px;font-size:20px;line-height:26px;color:#444;transform:scaleX(0.8435);">%</span>
<span class="t" style="left:16.80px;top:190.80px;font-size:13.5px;line-height:18px;color:#444;transform:scaleX(1.0175);">D36</span>
<span class="t" style="left:281.20px;top:190.80px;font-size:13.5px;line-height:18px;color:#444;transform:scaleX(1.0081);">=TOTAL!H34</span>
<span class="t" style="left:240.55px;top:189.80px;font-size:14.5px;line-height:19px;color:#5a5a5a;font-family:'Liberation Serif',serif;font-weight:bold;font-style:italic;transform:scaleX(0.9521);">fx</span>
<span class="t" style="left:125.45px;top:224.50px;font-size:13.5px;line-height:18px;color:#444;transform:scaleX(0.9000);">A</span>
<span class="t" style="left:313.95px;top:224.50px;font-size:13.5px;line-height:18px;color:#444;transform:scaleX(0.9000);">B</span>
<span class="t" style="left:502.61px;top:224.50px;font-size:13.5px;line-height:18px;color:#444;transform:scaleX(0.9000);">C</span>
<span class="t" style="left:692.11px;top:224.50px;font-size:13.5px;line-height:18px;color:#217346;transform:scaleX(0.9000);">D</span>
<span class="t" style="left:881.45px;top:224.50px;font-size:13.5px;line-height:18px;color:#444;transform:scaleX(0.9000);">E</span>
<span class="t" style="left:17.34px;top:314.80px;font-size:14px;line-height:18px;color:#444;transform:scaleX(0.9400);-webkit-text-stroke:0.15px #444;">1</span>
<span class="t" style="left:17.34px;top:356.60px;font-size:14px;line-height:18px;color:#444;transform:scaleX(0.9400);-webkit-text-stroke:0.15px #444;">2</span>
<span class="t" style="left:17.34px;top:378.50px;font-size:14px;line-height:18px;color:#444;transform:scaleX(0.9400);-webkit-text-stroke:0.15px #444;">3</span>
<span class="t" style="left:17.34px;top:394.70px;font-size:14px;line-height:18px;color:#444;transform:scaleX(0.9400);-webkit-text-stroke:0.15px #444;">4</span>
<span class="t" style="left:17.34px;top:410.90px;font-size:14px;line-height:18px;color:#444;transform:scaleX(0.9400);-webkit-text-stroke:0.15px #444;">5</span>
<span class="t" style="left:17.34px;top:427.10px;font-size:14px;line-height:18px;color:#444;transform:scaleX(0.9400);-webkit-text-stroke:0.15px #444;">6</span>
<span class="t" style="left:17.34px;top:443.30px;font-size:14px;line-height:18px;color:#444;transform:scaleX(0.9400);-webkit-text-stroke:0.15px #444;">7</span>
<span class="t" style="left:17.34px;top:459.50px;font-size:14px;line-height:18px;color:#444;transform:scaleX(0.9400);-webkit-text-stroke:0.15px #444;">8</span>
<span class="t" style="left:17.34px;top:475.70px;font-size:14px;line-height:18px;color:#444;transform:scaleX(0.9400);-webkit-text-stroke:0.15px #444;">9</span>
<span class="t" style="left:13.68px;top:491.90px;font-size:14px;line-height:18px;color:#444;transform:scaleX(0.9400);-webkit-text-stroke:0.15px #444;">10</span>
<span class="t" style="left:14.17px;top:508.10px;font-size:14px;line-height:18px;color:#444;transform:scaleX(0.9400);-webkit-text-stroke:0.15px #444;">11</span>
<span class="t" style="left:13.68px;top:524.30px;font-size:14px;line-height:18px;color:#444;transform:scaleX(0.9400);-webkit-text-stroke:0.15px #444;">12</span>
<span class="t" style="left:13.68px;top:540.50px;font-size:14px;line-height:18px;color:#444;transform:scaleX(0.9400);-webkit-text-stroke:0.15px #444;">13</span>
<span class="t" style="left:13.68px;top:556.70px;font-size:14px;line-height:18px;color:#444;transform:scaleX(0.9400);-webkit-text-stroke:0.15px #444;">14</span>
<span class="t" style="left:13.68px;top:572.90px;font-size:14px;line-height:18px;color:#444;transform:scaleX(0.9400);-webkit-text-stroke:0.15px #444;">15</span>
<span class="t" style="left:13.68px;top:589.10px;font-size:14px;line-height:18px;color:#444;transform:scaleX(0.9400);-webkit-text-stroke:0.15px #444;">16</span>
<span class="t" style="left:13.68px;top:605.30px;font-size:14px;line-height:18px;color:#444;transform:scaleX(0.9400);-webkit-text-stroke:0.15px #444;">17</span>
<span class="t" style="left:13.68px;top:621.50px;font-size:14px;line-height:18px;color:#444;transform:scaleX(0.9400);-webkit-text-stroke:0.15px #444;">18</span>
<span class="t" style="left:13.68px;top:637.70px;font-size:14px;line-height:18px;color:#444;transform:scaleX(0.9400);-webkit-text-stroke:0.15px #444;">19</span>
<span class="t" style="left:13.68px;top:653.90px;font-size:14px;line-height:18px;color:#444;transform:scaleX(0.9400);-webkit-text-stroke:0.15px #444;">20</span>
<span class="t" style="left:13.68px;top:670.10px;font-size:14px;line-height:18px;color:#444;transform:scaleX(0.9400);-webkit-text-stroke:0.15px #444;clip-path:inset(0 0 9.1px 0);">21</span>
<span class="t" style="left:254.52px;top:277.50px;font-size:15.5px;line-height:20px;color:#111;font-weight:bold;">PROGRESS ACROSS ALL FOUR SPECIFICATION TOPICS - PHYS / PSYCH / SOCIO / BIOMECH</span>
<span class="t" style="left:92.47px;top:346.50px;font-size:12.7px;line-height:17px;color:#fff;font-weight:bold;">CLASS LIST</span>
<span class="t" style="left:98.00px;top:378.80px;font-size:9.7px;line-height:13px;color:#fff;">Student Name</span>
<span class="t" style="left:273.05px;top:344.80px;font-size:14px;line-height:18px;color:#111;font-weight:bold;transform:scaleX(0.9915);">Race to 100%</span>
<span class="t" style="left:235.10px;top:378.80px;font-size:10px;line-height:13px;color:#222;">Who has the most 100% test scores?</span>
<span class="t" style="left:432.02px;top:345.30px;font-size:12.9px;line-height:17px;color:#111;font-weight:bold;">Total Study Time (Hours)</span>
<span class="t" style="left:447.55px;top:378.80px;font-size:9.9px;line-height:13px;color:#222;">Time spent studying videos</span>
<span class="t" style="left:627.52px;top:345.30px;font-size:13.1px;line-height:17px;color:#111;font-weight:bold;">Total Test Average (%)</span>
<span class="t" style="left:654.55px;top:378.80px;font-size:10px;line-height:13px;color:#222;">Average test score</span>
<span class="t" style="left:831.98px;top:345.30px;font-size:13px;line-height:17px;color:#111;font-weight:bold;">Total Tests Taken</span>
<span class="t" style="left:821.75px;top:378.80px;font-size:10px;line-height:13px;color:#222;">Practice, tests &amp; checkpoints</span>
<span class="t" style="left:125.06px;top:395.50px;font-size:13px;line-height:17px;color:#fff;-webkit-text-stroke:0.15px #fff;">A</span>
<span class="t" style="left:312.78px;top:397.40px;font-size:11px;line-height:14px;color:#54450c;-webkit-text-stroke:0.12px #54450c;">10</span>
<span class="t" style="left:490.82px;top:397.90px;font-size:10px;line-height:13px;color:#4f431a;">3:28:25</span>
<span class="t" style="left:686.49px;top:397.90px;font-size:10px;line-height:13px;color:#4f431a;">52%</span>
<span class="t" style="left:880.24px;top:397.90px;font-size:10px;line-height:13px;color:#4f431a;">25</span>
<span class="t" style="left:125.06px;top:411.70px;font-size:13px;line-height:17px;color:#fff;-webkit-text-stroke:0.15px #fff;">B</span>
<span class="t" style="left:315.84px;top:413.60px;font-size:11px;line-height:14px;color:#54450c;-webkit-text-stroke:0.12px #54450c;">9</span>
<span class="t" style="left:490.82px;top:414.10px;font-size:10px;line-height:13px;color:#4f431a;">2:00:42</span>
<span class="t" style="left:686.49px;top:414.10px;font-size:10px;line-height:13px;color:#4f431a;">18%</span>
<span class="t" style="left:880.24px;top:414.10px;font-size:10px;line-height:13px;color:#4f431a;">16</span>
<span class="t" style="left:124.71px;top:427.90px;font-size:13px;line-height:17px;color:#fff;-webkit-text-stroke:0.15px #fff;">C</span>
<span class="t" style="left:315.84px;top:429.80px;font-size:11px;line-height:14px;color:#54450c;-webkit-text-stroke:0.12px #54450c;">0</span>
<span class="t" style="left:491.19px;top:430.30px;font-size:10px;line-height:13px;color:#4f431a;">0:51:11</span>
<span class="t" style="left:686.49px;top:430.30px;font-size:10px;line-height:13px;color:#4f431a;">19%</span>
<span class="t" style="left:880.61px;top:430.30px;font-size:10px;line-height:13px;color:#4f431a;">11</span>
<span class="t" style="left:124.71px;top:444.10px;font-size:13px;line-height:17px;color:#fff;-webkit-text-stroke:0.15px #fff;">D</span>
<span class="t" style="left:315.84px;top:446.00px;font-size:11px;line-height:14px;color:#54450c;-webkit-text-stroke:0.12px #54450c;">1</span>
<span class="t" style="left:490.82px;top:446.50px;font-size:10px;line-height:13px;color:#4f431a;">0:27:34</span>
<span class="t" style="left:686.49px;top:446.50px;font-size:10px;line-height:13px;color:#4f431a;">13%</span>
<span class="t" style="left:883.02px;top:446.50px;font-size:10px;line-height:13px;color:#4f431a;">3</span>
<span class="t" style="left:125.06px;top:460.30px;font-size:13px;line-height:17px;color:#fff;-webkit-text-stroke:0.15px #fff;">E</span>
<span class="t" style="left:315.84px;top:462.20px;font-size:11px;line-height:14px;color:#54450c;-webkit-text-stroke:0.12px #54450c;">3</span>
<span class="t" style="left:490.82px;top:462.70px;font-size:10px;line-height:13px;color:#4f431a;">1:34:13</span>
<span class="t" style="left:686.49px;top:462.70px;font-size:10px;line-height:13px;color:#4f431a;">36%</span>
<span class="t" style="left:880.24px;top:462.70px;font-size:10px;line-height:13px;color:#4f431a;">18</span>
<span class="t" style="left:125.43px;top:476.50px;font-size:13px;line-height:17px;color:#fff;-webkit-text-stroke:0.15px #fff;">F</span>
<span class="t" style="left:315.84px;top:478.40px;font-size:11px;line-height:14px;color:#54450c;-webkit-text-stroke:0.12px #54450c;">9</span>
<span class="t" style="left:490.82px;top:478.90px;font-size:10px;line-height:13px;color:#4f431a;">2:58:13</span>
<span class="t" style="left:686.49px;top:478.90px;font-size:10px;line-height:13px;color:#4f431a;">19%</span>
<span class="t" style="left:880.24px;top:478.90px;font-size:10px;line-height:13px;color:#4f431a;">19</span>
<span class="t" style="left:124.34px;top:492.70px;font-size:13px;line-height:17px;color:#fff;-webkit-text-stroke:0.15px #fff;">G</span>
<span class="t" style="left:315.84px;top:494.60px;font-size:11px;line-height:14px;color:#54450c;-webkit-text-stroke:0.12px #54450c;">1</span>
<span class="t" style="left:490.82px;top:495.10px;font-size:10px;line-height:13px;color:#4f431a;">2:12:41</span>
<span class="t" style="left:686.49px;top:495.10px;font-size:10px;line-height:13px;color:#4f431a;">15%</span>
<span class="t" style="left:880.24px;top:495.10px;font-size:10px;line-height:13px;color:#4f431a;">14</span>
<span class="t" style="left:124.71px;top:508.90px;font-size:13px;line-height:17px;color:#fff;-webkit-text-stroke:0.15px #fff;">H</span>
<span class="t" style="left:315.84px;top:510.80px;font-size:11px;line-height:14px;color:#54450c;-webkit-text-stroke:0.12px #54450c;">1</span>
<span class="t" style="left:490.82px;top:511.30px;font-size:10px;line-height:13px;color:#4f431a;">0:32:55</span>
<span class="t" style="left:686.49px;top:511.30px;font-size:10px;line-height:13px;color:#4f431a;">45%</span>
<span class="t" style="left:883.02px;top:511.30px;font-size:10px;line-height:13px;color:#4f431a;">3</span>
<span class="t" style="left:127.59px;top:525.10px;font-size:13px;line-height:17px;color:#fff;-webkit-text-stroke:0.15px #fff;">I</span>
<span class="t" style="left:315.84px;top:527.00px;font-size:11px;line-height:14px;color:#54450c;-webkit-text-stroke:0.12px #54450c;">9</span>
<span class="t" style="left:490.82px;top:527.50px;font-size:10px;line-height:13px;color:#4f431a;">3:30:01</span>
<span class="t" style="left:686.49px;top:527.50px;font-size:10px;line-height:13px;color:#4f431a;">41%</span>
<span class="t" style="left:880.24px;top:527.50px;font-size:10px;line-height:13px;color:#4f431a;">27</span>
<span class="t" style="left:126.15px;top:541.30px;font-size:13px;line-height:17px;color:#fff;-webkit-text-stroke:0.15px #fff;">J</span>
<span class="t" style="left:315.84px;top:543.20px;font-size:11px;line-height:14px;color:#54450c;-webkit-text-stroke:0.12px #54450c;">7</span>
<span class="t" style="left:490.82px;top:543.70px;font-size:10px;line-height:13px;color:#4f431a;">2:51:33</span>
<span class="t" style="left:686.49px;top:543.70px;font-size:10px;line-height:13px;color:#4f431a;">34%</span>
<span class="t" style="left:880.24px;top:543.70px;font-size:10px;line-height:13px;color:#4f431a;">25</span>
<span class="t" style="left:125.06px;top:557.50px;font-size:13px;line-height:17px;color:#fff;-webkit-text-stroke:0.15px #fff;">K</span>
<span class="t" style="left:315.84px;top:559.40px;font-size:11px;line-height:14px;color:#54450c;-webkit-text-stroke:0.12px #54450c;">2</span>
<span class="t" style="left:490.82px;top:559.90px;font-size:10px;line-height:13px;color:#4f431a;">3:30:06</span>
<span class="t" style="left:686.49px;top:559.90px;font-size:10px;line-height:13px;color:#4f431a;">37%</span>
<span class="t" style="left:880.24px;top:559.90px;font-size:10px;line-height:13px;color:#4f431a;">19</span>
<span class="t" style="left:125.78px;top:573.70px;font-size:13px;line-height:17px;color:#fff;-webkit-text-stroke:0.15px #fff;">L</span>
<span class="t" style="left:312.78px;top:575.60px;font-size:11px;line-height:14px;color:#54450c;-webkit-text-stroke:0.12px #54450c;">10</span>
<span class="t" style="left:490.82px;top:576.10px;font-size:10px;line-height:13px;color:#4f431a;">6:03:31</span>
<span class="t" style="left:686.49px;top:576.10px;font-size:10px;line-height:13px;color:#4f431a;">61%</span>
<span class="t" style="left:880.24px;top:576.10px;font-size:10px;line-height:13px;color:#4f431a;">38</span>
<span class="t" style="left:123.99px;top:589.90px;font-size:13px;line-height:17px;color:#fff;-webkit-text-stroke:0.15px #fff;">M</span>
<span class="t" style="left:312.78px;top:591.80px;font-size:11px;line-height:14px;color:#54450c;-webkit-text-stroke:0.12px #54450c;">26</span>
<span class="t" style="left:490.82px;top:592.30px;font-size:10px;line-height:13px;color:#4f431a;">3:43:22</span>
<span class="t" style="left:686.49px;top:592.30px;font-size:10px;line-height:13px;color:#4f431a;">73%</span>
<span class="t" style="left:880.24px;top:592.30px;font-size:10px;line-height:13px;color:#4f431a;">51</span>
<span class="t" style="left:124.71px;top:606.10px;font-size:13px;line-height:17px;color:#fff;-webkit-text-stroke:0.15px #fff;">N</span>
<span class="t" style="left:312.78px;top:608.00px;font-size:11px;line-height:14px;color:#54450c;-webkit-text-stroke:0.12px #54450c;">26</span>
<span class="t" style="left:488.04px;top:608.50px;font-size:10px;line-height:13px;color:#4f431a;">15:36:44</span>
<span class="t" style="left:686.49px;top:608.50px;font-size:10px;line-height:13px;color:#4f431a;">48%</span>
<span class="t" style="left:880.24px;top:608.50px;font-size:10px;line-height:13px;color:#4f431a;">96</span>
<span class="t" style="left:124.34px;top:622.30px;font-size:13px;line-height:17px;color:#fff;-webkit-text-stroke:0.15px #fff;">O</span>
<span class="t" style="left:312.78px;top:624.20px;font-size:11px;line-height:14px;color:#54450c;-webkit-text-stroke:0.12px #54450c;">38</span>
<span class="t" style="left:488.04px;top:624.70px;font-size:10px;line-height:13px;color:#4f431a;">14:47:22</span>
<span class="t" style="left:686.49px;top:624.70px;font-size:10px;line-height:13px;color:#4f431a;">55%</span>
<span class="t" style="left:880.24px;top:624.70px;font-size:10px;line-height:13px;color:#4f431a;">86</span>
<span class="t" style="left:125.78px;top:638.50px;font-size:13px;line-height:17px;color:#fff;-webkit-text-stroke:0.15px #fff;">0</span>
<span class="t" style="left:315.84px;top:640.40px;font-size:11px;line-height:14px;color:#54450c;-webkit-text-stroke:0.12px #54450c;">0</span>
<span class="t" style="left:490.82px;top:640.90px;font-size:10px;line-height:13px;color:#4f431a;">0:00:00</span>
<span class="t" style="left:689.27px;top:640.90px;font-size:10px;line-height:13px;color:#4f431a;">0%</span>
<span class="t" style="left:883.02px;top:640.90px;font-size:10px;line-height:13px;color:#4f431a;">0</span>
<span class="t" style="left:125.78px;top:654.70px;font-size:13px;line-height:17px;color:#fff;-webkit-text-stroke:0.15px #fff;">0</span>
<span class="t" style="left:315.84px;top:656.60px;font-size:11px;line-height:14px;color:#54450c;-webkit-text-stroke:0.12px #54450c;">0</span>
<span class="t" style="left:490.82px;top:657.10px;font-size:10px;line-height:13px;color:#4f431a;">0:00:00</span>
<span class="t" style="left:689.27px;top:657.10px;font-size:10px;line-height:13px;color:#4f431a;">0%</span>
<span class="t" style="left:883.02px;top:657.10px;font-size:10px;line-height:13px;color:#4f431a;">0</span>
<span class="t" style="left:125.78px;top:670.90px;font-size:13px;line-height:17px;color:#fff;clip-path:inset(0 0 7.8px 0);-webkit-text-stroke:0.15px #fff;">0</span>
<span class="t" style="left:315.84px;top:672.80px;font-size:11px;line-height:14px;color:#54450c;clip-path:inset(0 0 7.8px 0);-webkit-text-stroke:0.12px #54450c;">0</span>
<span class="t" style="left:490.82px;top:673.30px;font-size:10px;line-height:13px;color:#4f431a;clip-path:inset(0 0 7.8px 0);">0:00:00</span>
<span class="t" style="left:689.27px;top:673.30px;font-size:10px;line-height:13px;color:#4f431a;clip-path:inset(0 0 7.8px 0);">0%</span>
<span class="t" style="left:883.02px;top:673.30px;font-size:10px;line-height:13px;color:#4f431a;clip-path:inset(0 0 7.8px 0);">0</span>
<span class="t" style="left:99.00px;top:680.80px;font-size:13.5px;line-height:18px;color:#2a774c;font-weight:bold;transform:scaleX(0.9763);">SUMMARY OF PROGRESS</span>
<span class="t" style="left:286.75px;top:680.80px;font-size:13.5px;line-height:18px;color:#1c4643;transform:scaleX(0.8963);">COURSE1</span>
<span class="t" style="left:365.75px;top:680.80px;font-size:13.5px;line-height:18px;color:#1c4643;transform:scaleX(0.8963);">COURSE2</span>
<span class="t" style="left:444.75px;top:680.80px;font-size:13.5px;line-height:18px;color:#1c4643;transform:scaleX(0.8963);">COURSE3</span>
<span class="t" style="left:523.95px;top:680.80px;font-size:13.5px;line-height:18px;color:#1c4643;transform:scaleX(0.8963);">COURSE4</span>
<span class="t" style="left:287.00px;top:85.70px;font-size:17.5px;line-height:23px;color:#444;transform:scaleX(1.0109);">A</span>
<span class="t" style="left:313.00px;top:89.70px;font-size:13.5px;line-height:18px;color:#444;">A</span>
<span class="t" style="left:297.80px;top:120.10px;font-size:16px;line-height:21px;color:#444;transform:scaleX(1.0119);">A</span>
<span class="t" style="left:425.2px;top:89.6px;font-size:12px;line-height:14px;color:#444;transform-origin:50% 50%;transform:rotate(-52deg) scaleX(0.98);">ab</span>
<span class="t" style="left:484.80px;top:87.60px;font-size:11px;line-height:14px;color:#444;transform:scaleX(0.9480);">ab</span>
<span class="t" style="left:485.00px;top:96.60px;font-size:11px;line-height:14px;color:#444;transform:scaleX(0.9455);">c</span>
<span class="t" style="left:737.20px;top:123.00px;font-size:10.2px;line-height:13px;color:#444;">0</span>
<span class="t" style="left:728.60px;top:131.10px;font-size:10.2px;line-height:13px;color:#444;">.00</span>
<span class="t" style="left:752.60px;top:123.00px;font-size:10.2px;line-height:13px;color:#444;">.00</span>
<span class="t" style="left:761.20px;top:131.10px;font-size:10.2px;line-height:13px;color:#444;">0</span>
<span class="t" style="left:63.3px;top:244.5px;font-size:61px;line-height:61px;color:#fff;font-family:'Liberation Serif',serif;font-weight:bold;transform:scaleX(0.66);-webkit-text-stroke:1.6px #fff;">P</span>
<span class="t" style="left:91.3px;top:244.5px;font-size:61px;line-height:61px;color:#fff;font-family:'Liberation Serif',serif;font-weight:bold;transform:scaleX(0.60);-webkit-text-stroke:1.6px #fff;">E</span>
<span class="t" style="left:80.5px;top:269px;font-size:29px;line-height:29px;color:#2f77dd;font-weight:bold;transform:scaleX(0.95) rotate(4deg);-webkit-text-stroke:0.8px #2f77dd;">4</span>
<span class="t" style="left:63.60px;top:294.50px;font-size:9px;line-height:12px;color:#e8333a;font-weight:bold;transform:scaleX(1.0638);-webkit-text-stroke:0.5px #e8333a;text-shadow:0 0 1.5px #fff,0 0 1.5px #fff,0 0 1px #fff;">LEARNING</span>
</body></html>
